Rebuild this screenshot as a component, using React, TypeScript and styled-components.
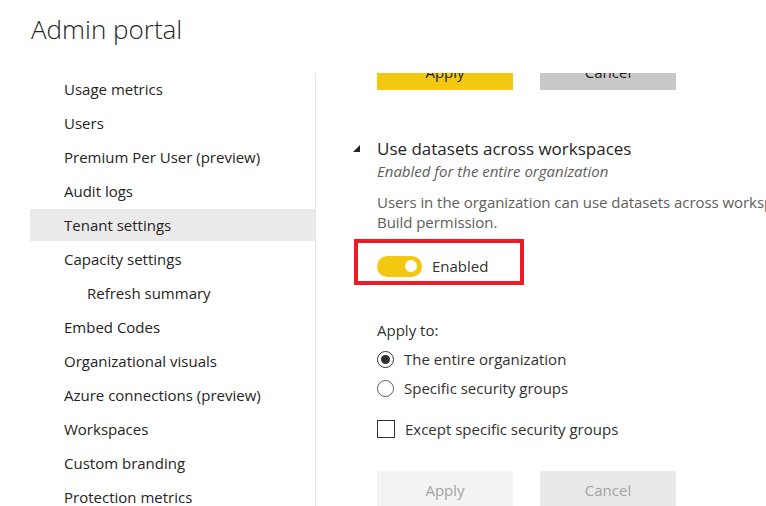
import React, { useLayoutEffect, useRef } from "react";
import styled, { createGlobalStyle, css } from "styled-components";

const FONT = `"Open Sans", "Noto Sans", "Liberation Sans", sans-serif`;

const GlobalStyle = createGlobalStyle`
  html, body {
    margin: 0;
    padding: 0;
    overflow: hidden;
    background: #ffffff;
  }
  body {
    font-family: ${FONT};
    color: #252423;
  }
  * { box-sizing: border-box; }
`;

const Page = styled.div`
  width: 766px;
  height: 506px;
  display: flex;
  flex-direction: column;
  overflow: hidden;
  background: #fff;
`;

const Title = styled.h1`
  margin: 0;
  height: 73px;
  padding: 11px 0 0 31px;
  font-size: 26px;
  line-height: 36px;
  font-weight: 300;
  color: #252423;
`;

const Body = styled.div`
  flex: 1;
  min-height: 0;
  display: flex;
`;

const Sidebar = styled.nav`
  width: 286px;
  margin-left: 30px;
  flex: none;
  border-right: 1px solid #e6e6e6;
  display: flex;
  flex-direction: column;
  gap: 2px;
  overflow: hidden;
`;

const NavItem = styled.div<{ $selected?: boolean; $indent?: boolean }>`
  flex: none;
  height: 32px;
  display: flex;
  align-items: center;
  padding-left: ${(p) => (p.$indent ? 57 : 34)}px;
  font-size: 15px;
  color: #252423;
  white-space: nowrap;
  ${(p) =>
    p.$selected &&
    css`
      background: #eaeaea;
    `}
`;

const Viewport = styled.div`
  flex: 1;
  min-width: 0;
  overflow: hidden;
`;

const Content = styled.div`
  padding: 0 0 40px 61px;
  display: flex;
  flex-direction: column;
`;

const ButtonRow = styled.div<{ $top?: number }>`
  display: flex;
  gap: 27px;
  margin-top: ${(p) => p.$top ?? 0}px;
`;

const Button = styled.div<{ $variant: "primary" | "secondary" | "disabled" | "disabledAlt" }>`
  width: 136px;
  height: 37px;
  display: flex;
  align-items: center;
  justify-content: center;
  font-size: 15px;
  ${(p) =>
    p.$variant === "primary"
      ? css`
          background: #f2c811;
          color: #252423;
        `
      : p.$variant === "secondary"
      ? css`
          background: #c8c8c8;
          color: #252423;
        `
      : p.$variant === "disabled"
      ? css`
          background: #f3f3f3;
          color: #a3a3a3;
        `
      : css`
          background: #e9e9e9;
          color: #a3a3a3;
        `}
`;

const SettingHeader = styled.div`
  margin-top: 46px;
  position: relative;
  display: flex;
  align-items: center;
  height: 24px;
`;

const Caret = styled.svg`
  position: absolute;
  left: -24px;
  top: 9px;
  width: 7px;
  height: 7px;
`;

const HeaderText = styled.div`
  font-size: 17px;
  color: #252423;
  white-space: nowrap;
`;

const Subtitle = styled.div`
  margin-top: 1px;
  font-size: 15px;
  line-height: 20px;
  font-style: italic;
  color: #605e5c;
  white-space: nowrap;
`;

const Description = styled.div`
  margin-top: 12px;
  font-size: 15px;
  line-height: 19.5px;
  color: #605e5c;
  white-space: nowrap;
  letter-spacing: -0.05px;
`;

const ToggleRow = styled.div`
  margin-top: 24px;
  position: relative;
  display: flex;
  align-items: center;
  gap: 10px;
  height: 20px;
`;

const Highlight = styled.div`
  position: absolute;
  left: -23px;
  top: -17px;
  width: 170px;
  height: 46px;
  border: 4px solid #ed1c24;
  pointer-events: none;
`;

const Toggle = styled.div<{ $on: boolean }>`
  width: 45px;
  height: 21px;
  border-radius: 11px;
  background: ${(p) => (p.$on ? "#f2c811" : "#c8c6c4")};
  display: flex;
  align-items: center;
  justify-content: ${(p) => (p.$on ? "flex-end" : "flex-start")};
  padding: 0 5px;
`;

const Knob = styled.div`
  width: 12px;
  height: 12px;
  border-radius: 50%;
  background: #fff;
`;

const Label = styled.span`
  font-size: 15px;
  color: #323130;
  white-space: nowrap;
`;

const SectionLabel = styled.div`
  margin-top: 44px;
  font-size: 15px;
  line-height: 20px;
  color: #323130;
`;

const OptionRow = styled.div<{ $top: number }>`
  margin-top: ${(p) => p.$top}px;
  display: flex;
  align-items: center;
  gap: 10px;
  height: 20px;
`;

const Radio = styled.div<{ $checked: boolean }>`
  width: 17px;
  height: 17px;
  border-radius: 50%;
  border: 1px solid ${(p) => (p.$checked ? "#323130" : "#605e5c")};
  display: flex;
  align-items: center;
  justify-content: center;
  flex: none;
  &::after {
    content: "";
    width: 9px;
    height: 9px;
    border-radius: 50%;
    background: ${(p) => (p.$checked ? "#323130" : "transparent")};
  }
`;

const Checkbox = styled.div`
  width: 18px;
  height: 18px;
  border: 1px solid #323130;
  flex: none;
`;

const navItems: { label: string; selected?: boolean; indent?: boolean }[] = [
  { label: "Usage metrics" },
  { label: "Users" },
  { label: "Premium Per User (preview)" },
  { label: "Audit logs" },
  { label: "Tenant settings", selected: true },
  { label: "Capacity settings" },
  { label: "Refresh summary", indent: true },
  { label: "Embed Codes" },
  { label: "Organizational visuals" },
  { label: "Azure connections (preview)" },
  { label: "Workspaces" },
  { label: "Custom branding" },
  { label: "Protection metrics" },
];

export default function App() {
  const viewportRef = useRef<HTMLDivElement>(null);

  useLayoutEffect(() => {
    if (viewportRef.current) viewportRef.current.scrollTop = 20;
  }, []);

  return (
    <>
      <GlobalStyle />
      <Page>
        <Title>Admin portal</Title>
        <Body>
          <Sidebar>
            {navItems.map((item) => (
              <NavItem key={item.label} $selected={item.selected} $indent={item.indent}>
                {item.label}
              </NavItem>
            ))}
          </Sidebar>
          <Viewport ref={viewportRef}>
            <Content>
              <ButtonRow>
                <Button $variant="primary">Apply</Button>
                <Button $variant="secondary">Cancel</Button>
              </ButtonRow>

              <SettingHeader>
                <Caret viewBox="0 0 7 7">
                  <polygon points="7,0 7,7 0,7" fill="#252423" />
                </Caret>
                <HeaderText>Use datasets across workspaces</HeaderText>
              </SettingHeader>
              <Subtitle>Enabled for the entire organization</Subtitle>
              <Description>
                Users in the organization can use datasets across workspaces if they have the required
                <br />
                Build permission.
              </Description>

              <ToggleRow>
                <Highlight />
                <Toggle $on>
                  <Knob />
                </Toggle>
                <Label>Enabled</Label>
              </ToggleRow>

              <SectionLabel>Apply to:</SectionLabel>
              <OptionRow $top={9}>
                <Radio $checked />
                <Label>The entire organization</Label>
              </OptionRow>
              <OptionRow $top={9}>
                <Radio $checked={false} />
                <Label>Specific security groups</Label>
              </OptionRow>
              <OptionRow $top={21}>
                <Checkbox />
                <Label>Except specific security groups</Label>
              </OptionRow>

              <ButtonRow $top={32}>
                <Button $variant="disabled">Apply</Button>
                <Button $variant="disabledAlt">Cancel</Button>
              </ButtonRow>
            </Content>
          </Viewport>
        </Body>
      </Page>
    </>
  );
}
